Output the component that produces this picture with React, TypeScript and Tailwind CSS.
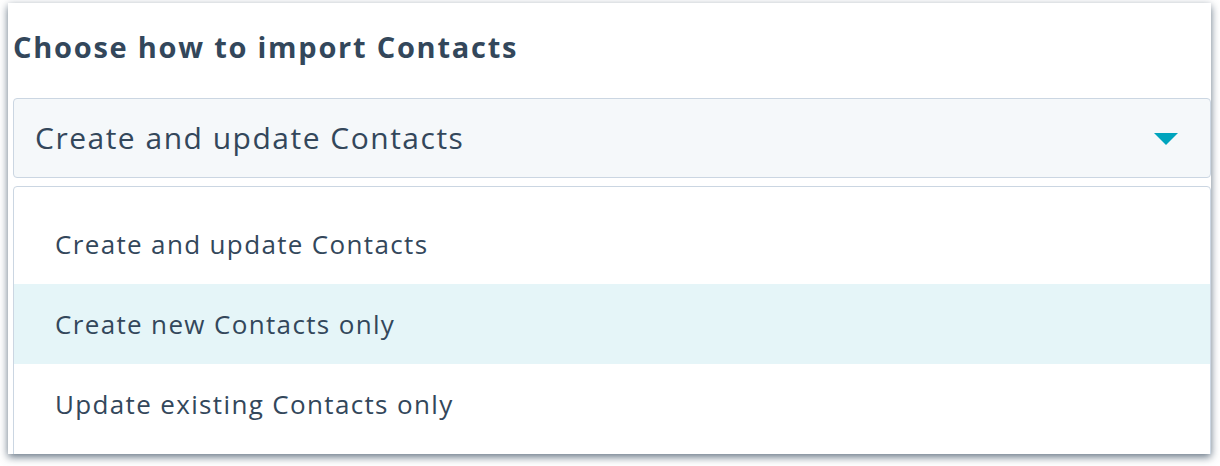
import { useState } from 'react';

const options = ['Create and update Contacts', 'Create new Contacts only', 'Update existing Contacts only'];

export default function App() {
  const [hovered, setHovered] = useState(1);

  return (
    <div className="w-[1220px] h-[466px] bg-white overflow-hidden font-['Open_Sans',sans-serif] text-[#33475b]">
      <div className="ml-[8px] mt-[3px] w-[1203px] h-[451px] bg-white overflow-hidden pl-[5px] shadow-[0_3px_8px_rgba(51,71,91,0.75)]">
        {/* Label */}
        <h2 className="h-[95px] pt-[26px] text-[29px] leading-[36px] font-bold tracking-[1.75px]">
          Choose how to import Contacts
        </h2>

        {/* Select trigger */}
        <button className="w-full h-[80px] flex items-center justify-between pl-[21px] pr-[32px] bg-[#f5f8fa] border border-[#cbd6e2] rounded-[4px] text-left">
          <span className="text-[30px] leading-none tracking-[1.5px]">{options[0]}</span>
          <svg width="24" height="12" viewBox="0 0 24 12" className="mt-[1px]">
            <path d="M0 0H24L12 12Z" fill="#00a4bd" />
          </svg>
        </button>

        {/* Menu */}
        <div className="mt-[8px] w-full h-[300px] bg-white border border-[#cbd6e2] rounded-t-[4px] pt-[17px]">
          {options.map((o, i) => (
            <div
              key={o}
              onMouseEnter={() => setHovered(i)}
              className={
                'h-[80px] flex items-center px-[41px] text-[26px] tracking-[1.35px] ' +
                (i === hovered ? 'bg-[#e5f5f8]' : 'bg-white')
              }
            >
              {o}
            </div>
          ))}
        </div>
      </div>
    </div>
  );
}
